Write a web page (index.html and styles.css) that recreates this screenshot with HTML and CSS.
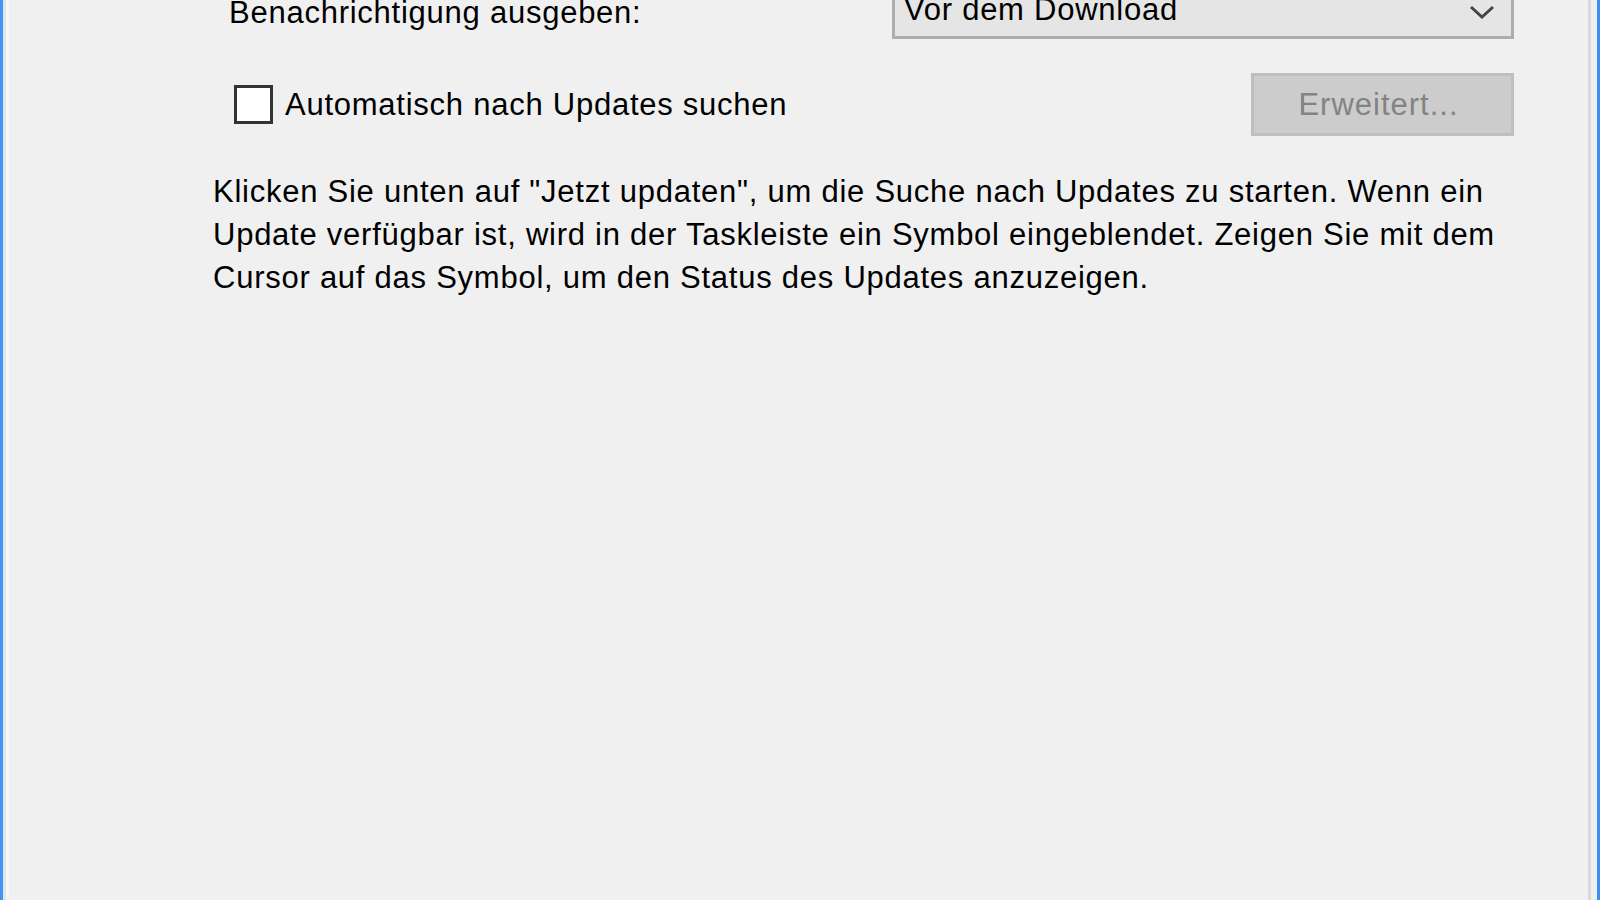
FILE: index.html
```html
<!DOCTYPE html>
<html lang="de">
<head>
  <meta charset="UTF-8">
  <title>Update-Einstellungen</title>
  <link rel="stylesheet" href="styles.css">
</head>
<body>

  <div class="window">
    <div class="panel">
      <!-- Benachrichtigung -->
      <div class="row row-notify">
        <span class="label">Benachrichtigung ausgeben:</span>
        <div class="select">
          <span>Vor dem Download</span>
          <svg class="chevron" width="26" height="16" viewBox="0 0 26 16">
            <path d="M2 3 L13 13 L24 3" fill="none" stroke="#444" stroke-width="3"/>
          </svg>
        </div>
      </div>

      <!-- Auto update -->
      <div class="row row-auto">
        <label class="check">
          <span class="box"></span>
          <span>Automatisch nach Updates suchen</span>
        </label>
        <button class="btn" disabled>Erweitert...</button>
      </div>

      <p class="info">
        Klicken Sie unten auf "Jetzt updaten", um die Suche nach Updates zu starten. Wenn ein<br>
        Update verfügbar ist, wird in der Taskleiste ein Symbol eingeblendet. Zeigen Sie mit dem<br>
        Cursor auf das Symbol, um den Status des Updates anzuzeigen.
      </p>
    </div>
  </div>

</body>
</html>
```

FILE: styles.css
```css
/* Page */
html, body {
  margin: 0;
  padding: 0;
  height: 100%;
  overflow: hidden;
}

body {
  background-color: #f0f0f0;
  font-family: 'Liberation Sans', Arial, sans-serif;
  letter-spacing: 0.75px;
  color: #000;
}

/* Window frame */
.window {
  height: 900px;
  box-sizing: border-box;
  overflow: hidden;
  border-left: 3px solid #3d97f4;
  border-right: 3px solid #3a8ff0;
  background-color: #f0f0f0;
  box-shadow: inset 3px 0 0 #e4e4e4, inset 6px 0 0 #f6f6f6, inset -6px 0 0 #f0f0f0, inset -9px 0 0 #d9d9d9;
}

.panel {
  padding: 0 83px 0 210px;
}

/* Rows */
.row {
  display: flex;
  align-items: center;
  justify-content: space-between;
  height: 63px;
}

.row-notify {
  margin-top: -24px;
}

.row-auto {
  margin-top: 34px;
}

.label {
  font-size: 31px;
  margin-left: 16px;
  position: relative;
  top: 5px;
}

/* Dropdown */
.select {
  width: 622px;
  height: 63px;
  box-sizing: border-box;
  border: 3px solid #adadad;
  background-color: #e5e5e5;
  display: flex;
  align-items: center;
  justify-content: space-between;
  padding: 0 16px 0 9px;
  font-size: 31px;
}

.select span {
  position: relative;
  top: 2px;
}

.chevron {
  margin-top: 8px;
}

/* Checkbox */
.check {
  display: flex;
  align-items: center;
  gap: 12px;
  font-size: 31px;
  margin-left: 21px;
}

.box {
  width: 39px;
  height: 39px;
  box-sizing: border-box;
  border: 3px solid #333;
  background-color: #fff;
}

/* Disabled button */
.btn {
  width: 263px;
  height: 63px;
  box-sizing: border-box;
  border: 3px solid #bfbfbf;
  background-color: #cccccc;
  color: #838383;
  font-family: inherit;
  font-size: 31px;
  letter-spacing: 1px;
  padding: 0 8px 0 0;
}

/* Info text */
.info {
  margin: 34px 0 0 0;
  font-size: 31px;
  line-height: 43px;
}
```
